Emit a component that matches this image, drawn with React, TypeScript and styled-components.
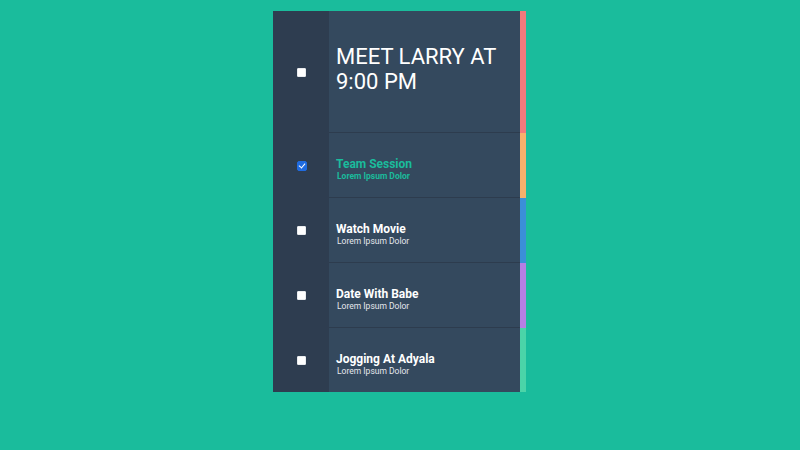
import styled, { createGlobalStyle } from 'styled-components';

const GlobalStyle = createGlobalStyle`
  body {
    margin: 0;
    background: #1abc9c;
    font-family: Roboto, 'Liberation Sans', sans-serif;
  }
`;

const Card = styled.ul`
  width: 253px;
  margin: 11px 0 0 calc(50% - 127px);
  padding: 0;
  list-style: none;
  display: flex;
  flex-direction: column;
`;

const Row = styled.li<{ $tall?: boolean }>`
  display: flex;
  height: ${props => (props.$tall ? '122px' : '65px')};

  &:last-child {
    height: 64px;
  }
`;

const CheckCell = styled.div`
  width: 56px;
  flex: 0 0 56px;
  background: #2e3d50;
  display: flex;
  align-items: center;
  justify-content: center;
  padding-left: 1px;
  box-sizing: border-box;
`;

const Check = styled.input`
  appearance: none;
  position: relative;
  margin: 0;
  width: 9px;
  height: 9px;
  border: 1px solid #e9ecef;
  border-radius: 1px;
  background: #ffffff;
  box-sizing: border-box;

  &:checked {
    width: 10px;
    height: 10px;
    border-color: #1f6be0;
    border-radius: 2px;
    background: #1f6be0;
  }

  &:checked::after {
    content: '';
    position: absolute;
    left: 2px;
    top: 0px;
    width: 3px;
    height: 5px;
    border: solid #ffffff;
    border-width: 0 1.5px 1.5px 0;
    transform: rotate(40deg);
  }
`;

const Content = styled.div<{ $tall?: boolean }>`
  flex: 1;
  background: #34495e;
  border-bottom: 1px solid #2d3c4e;
  padding: ${props => (props.$tall ? '33px 0 0 7px' : '7px 0 0 7px')};
  display: flex;
  flex-direction: column;
  justify-content: ${props => (props.$tall ? 'flex-start' : 'center')};

  li:last-child > & {
    border-bottom: none;
  }
`;

const Bar = styled.div<{ $color: string }>`
  width: 6px;
  flex: 0 0 6px;
  background: ${props => props.$color};
`;

const Heading = styled.h1`
  margin: 0;
  font-size: 22px;
  font-weight: 400;
  line-height: 25px;
  color: #ffffff;
  text-transform: uppercase;
`;

const Title = styled.div<{ $done?: boolean }>`
  font-size: 12px;
  font-weight: 700;
  line-height: 14px;
  color: ${props => (props.$done ? '#1abc9c' : '#ffffff')};
`;

const Subtitle = styled.div<{ $done?: boolean }>`
  margin-left: 1px;
  font-size: 8.5px;
  font-weight: ${props => (props.$done ? 700 : 400)};
  line-height: 10px;
  color: ${props => (props.$done ? '#1abc9c' : '#e4e8ec')};
`;

const tasks = [
  { title: 'Team Session', done: true, color: '#f6b06c' },
  { title: 'Watch Movie', done: false, color: '#3b8fd8' },
  { title: 'Date With Babe', done: false, color: '#b67fe4' },
  { title: 'Jogging At Adyala', done: false, color: '#4bd4a8' },
];

const App = () => {
  return (
    <>
      <GlobalStyle />
      <Card>
        <Row $tall>
          <CheckCell>
            <Check type="checkbox" />
          </CheckCell>
          <Content $tall>
            <Heading>Meet Larry at 9:00 pm</Heading>
          </Content>
          <Bar $color="#f17a7c" />
        </Row>
        {tasks.map(task => (
          <Row key={task.title}>
            <CheckCell>
              <Check type="checkbox" defaultChecked={task.done} />
            </CheckCell>
            <Content>
              <Title $done={task.done}>{task.title}</Title>
              <Subtitle $done={task.done}>Lorem Ipsum Dolor</Subtitle>
            </Content>
            <Bar $color={task.color} />
          </Row>
        ))}
      </Card>
    </>
  );
};

export default App;
